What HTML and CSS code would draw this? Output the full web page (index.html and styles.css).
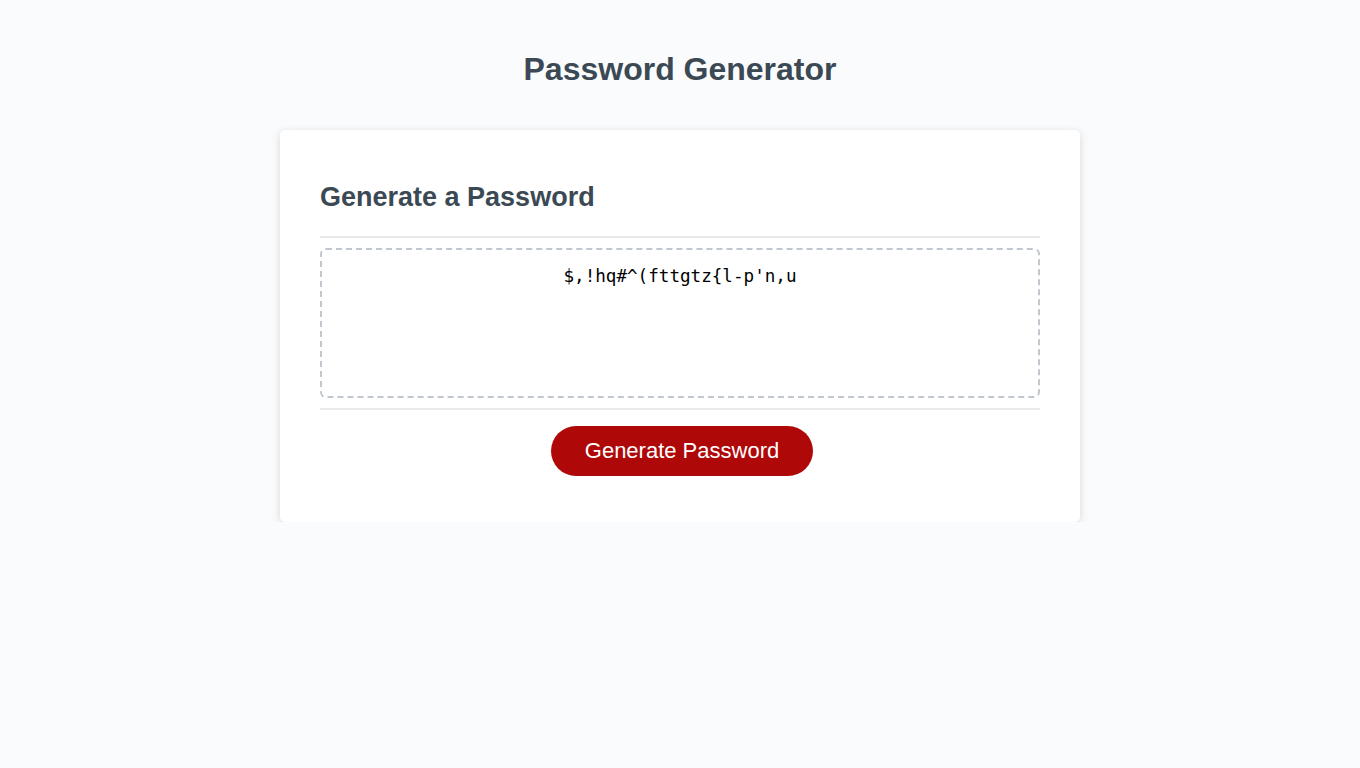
FILE: index.html
```html
<!DOCTYPE html>
<html lang="en">
<head>
<meta charset="UTF-8">
<title>Password Generator</title>
<link rel="stylesheet" href="styles.css">
</head>
<body>
<div class="wrapper">
  <header class="page-header">
    <h1>Password Generator</h1>
  </header>
  <div class="card">
    <div class="card-header">
      <h2>Generate a Password</h2>
    </div>
    <div class="card-body">
      <textarea readonly id="password" class="password" aria-label="Generated Password">$,!hq#^(fttgtz{l-p'n,u</textarea>
    </div>
    <div class="card-footer">
      <button id="generate" class="btn">Generate Password</button>
    </div>
  </div>
</div>
</body>
</html>
```
FILE: styles.css
```css
* {
  box-sizing: border-box;
}

body {
  margin: 0;
  background-color: #f9fbfd;
  font-family: "Liberation Sans", Arial, sans-serif;
}

.wrapper {
  padding: 0 20px;
}

.page-header {
  text-align: center;
  padding-top: 51px;
  color: hsl(206, 17%, 28%);
}

.page-header h1 {
  margin: 0;
  font-size: 32px;
  line-height: 36px;
  font-weight: bold;
}

.card {
  margin: 43px auto 0;
  max-width: 800px;
  padding: 30px 40px;
  background-color: #fff;
  border-radius: 5px;
  box-shadow: rgba(0, 0, 0, 0.15) 0 2px 8px 0;
  color: hsl(206, 17%, 28%);
  font-size: 18px;
}

.card-header h2 {
  margin: 22.4px 0;
  font-size: 27px;
  line-height: 31px;
  font-weight: bold;
}

.card-header::after,
.card-footer::before {
  content: "";
  display: block;
  width: 100%;
  height: 2px;
  background: #e7e9eb;
}

.password {
  display: block;
  width: 100%;
  height: 150px;
  margin: 10px 0;
  padding: 15px 15px 85px;
  border: 2px dashed #c0c7cf;
  border-radius: 6px;
  resize: none;
  overflow: hidden;
  text-align: center;
  font-family: "DejaVu Sans Mono", "Liberation Mono", monospace;
  font-size: 17.6px;
  line-height: 22px;
  color: #000;
  background: #fff;
  outline: none;
}

.card-footer {
  text-align: center;
}

.btn {
  display: inline-block;
  margin: 16px 16px 16px 20px;
  padding: 14px 34px;
  border: none;
  border-radius: 25px;
  background-color: hsl(360, 91%, 36%);
  color: #fff;
  font-family: "Liberation Sans", Arial, sans-serif;
  font-size: 22px;
  line-height: 22px;
  cursor: pointer;
}
```
